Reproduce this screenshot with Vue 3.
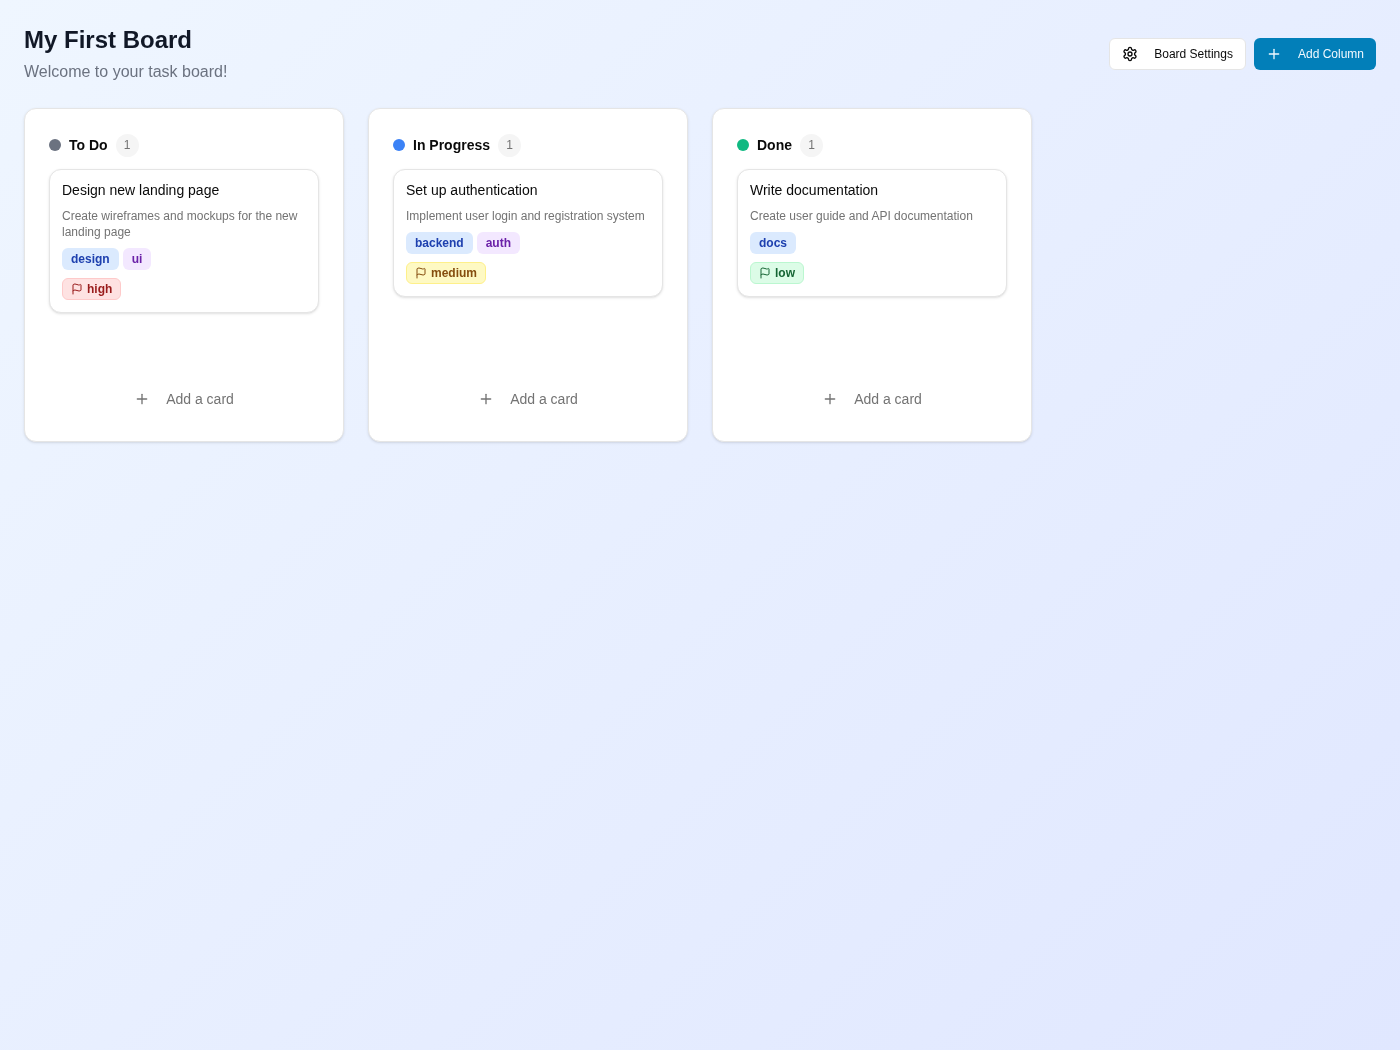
<script setup>
const columns = [
  {
    name: 'To Do',
    color: '#6b7280',
    cards: [
      {
        title: 'Design new landing page',
        text: 'Create wireframes and mockups for the new landing page',
        tags: [
          { label: 'design', kind: 'blue' },
          { label: 'ui', kind: 'purple' }
        ],
        priority: 'high'
      }
    ]
  },
  {
    name: 'In Progress',
    color: '#3b82f6',
    cards: [
      {
        title: 'Set up authentication',
        text: 'Implement user login and registration system',
        tags: [
          { label: 'backend', kind: 'blue' },
          { label: 'auth', kind: 'purple' }
        ],
        priority: 'medium'
      }
    ]
  },
  {
    name: 'Done',
    color: '#10b981',
    cards: [
      {
        title: 'Write documentation',
        text: 'Create user guide and API documentation',
        tags: [{ label: 'docs', kind: 'blue' }],
        priority: 'low'
      }
    ]
  }
]
</script>

<template>
  <div class="page">
    <header class="top">
      <div>
        <h1>My First Board</h1>
        <p class="sub">Welcome to your task board!</p>
      </div>
      <div class="actions">
        <button class="btn btn-light">
          <svg class="icon" viewBox="0 0 24 24">
            <path d="M12.22 2h-.44a2 2 0 0 0-2 2v.18a2 2 0 0 1-1 1.73l-.43.25a2 2 0 0 1-2 0l-.15-.08a2 2 0 0 0-2.73.73l-.22.38a2 2 0 0 0 .73 2.73l.15.1a2 2 0 0 1 1 1.72v.51a2 2 0 0 1-1 1.74l-.15.09a2 2 0 0 0-.73 2.73l.22.38a2 2 0 0 0 2.73.73l.15-.08a2 2 0 0 1 2 0l.43.25a2 2 0 0 1 1 1.73V20a2 2 0 0 0 2 2h.44a2 2 0 0 0 2-2v-.18a2 2 0 0 1 1-1.73l.43-.25a2 2 0 0 1 2 0l.15.08a2 2 0 0 0 2.73-.73l.22-.39a2 2 0 0 0-.73-2.73l-.15-.08a2 2 0 0 1-1-1.74v-.5a2 2 0 0 1 1-1.74l.15-.09a2 2 0 0 0 .73-2.73l-.22-.38a2 2 0 0 0-2.73-.73l-.15.08a2 2 0 0 1-2 0l-.43-.25a2 2 0 0 1-1-1.73V4a2 2 0 0 0-2-2z" />
            <circle cx="12" cy="12" r="3" />
          </svg>
          Board Settings
        </button>
        <button class="btn btn-blue">
          <svg class="icon" viewBox="0 0 24 24"><path d="M5 12h14" /><path d="M12 5v14" /></svg>
          Add Column
        </button>
      </div>
    </header>

    <main class="board">
      <section v-for="col in columns" :key="col.name" class="column">
        <div class="col-head">
          <span class="dot" :style="{ background: col.color }"></span>
          <h2>{{ col.name }}</h2>
          <span class="count">{{ col.cards.length }}</span>
        </div>

        <div class="cards">
          <article v-for="card in col.cards" :key="card.title" class="card">
            <h3>{{ card.title }}</h3>
            <p>{{ card.text }}</p>
            <div class="tags">
              <span v-for="tag in card.tags" :key="tag.label" class="tag" :class="tag.kind">{{ tag.label }}</span>
            </div>
            <span class="priority" :class="card.priority">
              <svg class="flag" viewBox="0 0 24 24">
                <path d="M4 22V4a1 1 0 0 1 .4-.8A6 6 0 0 1 8 2c3 0 5 2 7.333 2q2 0 3.067-.8A1 1 0 0 1 20 4v10a1 1 0 0 1-.4.8A6 6 0 0 1 16 16c-3 0-5-2-8-2a6 6 0 0 0-4 1.528" />
              </svg>
              {{ card.priority }}
            </span>
          </article>
        </div>

        <button class="add-card">
          <svg class="icon" viewBox="0 0 24 24"><path d="M5 12h14" /><path d="M12 5v14" /></svg>
          Add a card
        </button>
      </section>
    </main>
  </div>
</template>

<style>
body {
  margin: 0;
}
</style>

<style scoped>
.page {
  box-sizing: border-box;
  min-height: 1050px;
  padding: 24px;
  background: linear-gradient(135deg, #eff6ff 0%, #e0e7ff 100%);
  font-family: "Liberation Sans", Arial, sans-serif;
}

.top {
  display: flex;
  align-items: center;
  justify-content: space-between;
  margin-bottom: 24px;
  will-change: opacity;
}

h1 {
  margin: 0 0 4px;
  font-size: 24px;
  line-height: 32px;
  font-weight: 700;
  color: #111827;
}

.sub {
  margin: 0;
  font-size: 16px;
  line-height: 24px;
  color: #6b7280;
}

.actions {
  display: flex;
  gap: 8px;
}

.btn {
  display: flex;
  align-items: center;
  gap: 16px;
  box-sizing: border-box;
  height: 32px;
  padding: 0 12px;
  border: 0;
  border-radius: 6px;
  font: 12px "Liberation Sans", Arial, sans-serif;
}

.btn-light {
  background: #fff;
  border: 1px solid #e5e5e5;
  color: #0a0a0a;
}

.btn-blue {
  background: #027fb9;
  color: #f0f9ff;
}

.icon {
  width: 16px;
  height: 16px;
  fill: none;
  stroke: currentColor;
  stroke-width: 2;
  stroke-linecap: round;
  stroke-linejoin: round;
}

.board {
  display: flex;
  align-items: flex-start;
  gap: 24px;
  will-change: opacity;
}

.column {
  box-sizing: border-box;
  display: flex;
  flex-direction: column;
  width: 320px;
  height: 334px;
  padding: 24px;
  background: #fff;
  border: 1px solid #e5e5e5;
  border-radius: 12px;
  box-shadow: 0 1px 3px 0 rgba(0, 0, 0, 0.1), 0 1px 2px -1px rgba(0, 0, 0, 0.1);
}

.col-head {
  display: flex;
  align-items: center;
  height: 24px;
  margin-bottom: 12px;
}

.dot {
  width: 12px;
  height: 12px;
  border-radius: 50%;
  margin-right: 8px;
}

h2 {
  margin: 0 8px 0 0;
  font-size: 14px;
  font-weight: 700;
  color: #0a0a0a;
}

.count {
  box-sizing: border-box;
  width: 23px;
  height: 23px;
  border-radius: 50%;
  background: #f5f5f5;
  color: #737373;
  font-size: 12px;
  line-height: 23px;
  text-align: center;
}

.cards {
  flex: 1;
}

.card {
  padding: 12px;
  background: #fff;
  border: 1px solid #e5e5e5;
  border-radius: 12px;
  box-shadow: 0 1px 3px 0 rgba(0, 0, 0, 0.1), 0 1px 2px -1px rgba(0, 0, 0, 0.1);
}

h3 {
  margin: 0 0 10px;
  font-size: 14px;
  line-height: 16px;
  font-weight: 400;
  color: #0a0a0a;
}

.card p {
  margin: 0 0 8px;
  font-size: 12px;
  line-height: 16px;
  color: #737373;
}

.tags {
  display: flex;
  gap: 4px;
  margin-bottom: 8px;
}

.tag,
.priority {
  display: inline-flex;
  align-items: center;
  box-sizing: border-box;
  height: 22px;
  padding: 0 8px;
  border: 1px solid transparent;
  border-radius: 6px;
  font-size: 12px;
  font-weight: 700;
}

.priority {
  gap: 4px;
  vertical-align: top;
}

.flag {
  width: 12px;
  height: 12px;
  fill: none;
  stroke: currentColor;
  stroke-width: 2;
  stroke-linecap: round;
  stroke-linejoin: round;
}

.blue {
  background: #dbeafe;
  color: #1e40af;
}

.purple {
  background: #f3e8ff;
  color: #6b21a8;
}

.high {
  background: #fee2e2;
  border-color: #fecaca;
  color: #991b1b;
}

.medium {
  background: #fef9c3;
  border-color: #fef08a;
  color: #854d0e;
}

.low {
  background: #dcfce7;
  border-color: #bbf7d0;
  color: #166534;
}

.add-card {
  display: flex;
  align-items: center;
  justify-content: center;
  gap: 16px;
  height: 36px;
  padding: 0;
  border: 0;
  background: transparent;
  color: #737373;
  font: 14px "Liberation Sans", Arial, sans-serif;
}
</style>
